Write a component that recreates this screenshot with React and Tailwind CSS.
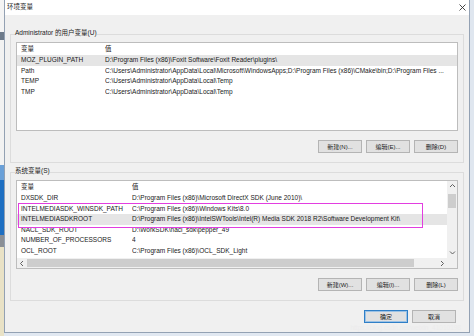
import React from "react";

const F = "font-['Liberation_Sans','Noto_Sans_CJK_SC',sans-serif]";

function Row({ name, value, selected, col }) {
  return (
    <div
      className={`flex h-[10.5px] shrink-0 items-center whitespace-nowrap leading-[10px] ${
        selected ? "bg-[#e5e5e5]" : ""
      }`}
    >
      <div className={`${col} shrink-0 pl-[4px]`}>{name}</div>
      <div className="min-w-0 flex-1 truncate pr-[4px] leading-[10px]">{value}</div>
    </div>
  );
}

function Header({ col }) {
  return (
    <div className="flex h-[12px] shrink-0 items-center leading-none">
      <div className={`${col} shrink-0 pl-[4px]`}>变量</div>
      <div className="flex-1">值</div>
    </div>
  );
}

function Btn({ children, primary }) {
  return (
    <div
      className={`flex h-[13px] w-[44px] items-center justify-center bg-[#e1e1e1] text-[6px] leading-none ${
        primary ? "border border-[#2f7fc7] outline outline-1 -outline-offset-2 outline-[#9cc2e5]" : "border border-[#b4b4b4]"
      }`}
    >
      {children}
    </div>
  );
}

function Chevron({ dir }) {
  const paths = {
    up: "M1 4 L3.5 1.5 L6 4",
    down: "M1 1.5 L3.5 4 L6 1.5",
    left: "M4 1 L1.5 3.5 L4 6",
    right: "M2 1 L4.5 3.5 L2 6",
  };
  return (
    <svg width="7" height="7" viewBox="0 0 7 7">
      <path d={paths[dir]} fill="none" stroke="#606060" strokeWidth="1" />
    </svg>
  );
}

function Legend({ children }) {
  return (
    <div className="absolute left-[4px] top-[-5px] bg-[#f0f0f0] text-[6.5px] leading-none text-[#1a1a1a]">
      {children}
    </div>
  );
}

export default function App() {
  const userCol = "w-[88px]";
  const sysCol = "w-[115px]";
  return (
    <div className={`relative flex h-[336px] w-[474px] overflow-hidden bg-[#e1e8f1] text-[#1a1a1a] ${F}`}>
      {/* desktop strip on the left */}
      <div className="flex h-full w-[4px] shrink-0 flex-col">
        <div className="h-[32px] bg-[#f4f4f4]" />
        <div className="h-[8px] bg-[#6d7a8a]" />
        <div className="h-[125px] bg-[#f2f2f2]" />
        <div className="h-[15px] bg-[#6aa0d8]" />
        <div className="h-[55px] bg-[#1e6fc2]" />
        <div className="h-[12px] bg-[#8a8f96]" />
        <div className="flex-1 bg-[#e9e2c6]" />
      </div>

      {/* window */}
      <div className="relative flex h-[333px] w-[466px] shrink-0 flex-col border border-t-0 border-[#93a1b3]">
        {/* title bar */}
        <div className="flex h-[15px] shrink-0 items-center justify-between bg-white pl-[2px] pr-[3px]">
          <span className="text-[6.5px] leading-none">环境变量</span>
          <svg width="7" height="7" viewBox="0 0 7 7">
            <path d="M0.5 0.5 L6.5 6.5 M6.5 0.5 L0.5 6.5" stroke="#333" strokeWidth="0.9" />
          </svg>
        </div>

        {/* body */}
        <div className="flex flex-1 flex-col bg-[#f0f0f0]">
          {/* user variables group */}
          <div className="relative ml-[5px] mr-[5px] mt-[19px] flex flex-col border border-[#dcdcdc] px-[5px] pb-[9px] pt-[7px]">
            <Legend>Administrator 的用户变量(U)</Legend>
            <div className="flex h-[89px] flex-col overflow-hidden border border-[#bdbdbd] bg-white text-[6.5px]">
              <Header col={userCol} />
              <Row col={userCol} selected name="MOZ_PLUGIN_PATH" value="D:\Program Files (x86)\Foxit Software\Foxit Reader\plugins\" />
              <Row
                col={userCol}
                name="Path"
                value="C:\Users\Administrator\AppData\Local\Microsoft\WindowsApps;D:\Program Files (x86)\CMake\bin;D:\Program Files ..."
              />
              <Row col={userCol} name="TEMP" value="C:\Users\Administrator\AppData\Local\Temp" />
              <Row col={userCol} name="TMP" value="C:\Users\Administrator\AppData\Local\Temp" />
            </div>
            <div className="mt-[9px] flex justify-end gap-[4px]">
              <Btn>新建(N)...</Btn>
              <Btn>编辑(E)...</Btn>
              <Btn>删除(D)</Btn>
            </div>
          </div>

          {/* system variables group */}
          <div className="relative ml-[5px] mr-[5px] mt-[9px] flex flex-col border border-[#dcdcdc] px-[5px] pb-[9px] pt-[7px]">
            <Legend>系统变量(S)</Legend>
            <div className="relative flex h-[89px] flex-col border border-[#bdbdbd] bg-white text-[6.5px]">
              <div className="flex min-h-0 flex-1">
                <div className="flex min-w-0 flex-1 flex-col overflow-hidden">
                  <Header col={sysCol} />
                  <Row col={sysCol} name="DXSDK_DIR" value="D:\Program Files (x86)\Microsoft DirectX SDK (June 2010)\" />
                  <Row col={sysCol} name="INTELMEDIASDK_WINSDK_PATH" value="C:\Program Files (x86)\Windows Kits\8.0" />
                  <Row
                    col={sysCol}
                    selected
                    name="INTELMEDIASDKROOT"
                    value="D:\Program Files (x86)\IntelSWTools\Intel(R) Media SDK 2018 R2\Software Development Kit\"
                  />
                  <Row col={sysCol} name="NACL_SDK_ROOT" value="D:\WorkSDK\nacl_sdk\pepper_49" />
                  <Row col={sysCol} name="NUMBER_OF_PROCESSORS" value="4" />
                  <Row col={sysCol} name="OCL_ROOT" value="C:\Program Files (x86)\OCL_SDK_Light" />
                </div>
                {/* vertical scrollbar */}
                <div className="flex w-[10px] shrink-0 flex-col items-center bg-[#f0f0f0]">
                  <div className="flex h-[10px] items-center justify-center">
                    <Chevron dir="up" />
                  </div>
                  <div className="mt-[3px] h-[14px] w-[8px] bg-[#cdcdcd]" />
                  <div className="flex-1" />
                  <div className="flex h-[10px] items-center justify-center">
                    <Chevron dir="down" />
                  </div>
                </div>
              </div>
              {/* horizontal scrollbar */}
              <div className="flex h-[10px] shrink-0">
                <div className="flex flex-1 items-center bg-[#f0f0f0]">
                  <div className="flex w-[10px] justify-center">
                    <Chevron dir="left" />
                  </div>
                  <div className="h-[8px] w-[387px] bg-[#cdcdcd]" />
                  <div className="flex-1" />
                  <div className="flex w-[10px] justify-center">
                    <Chevron dir="right" />
                  </div>
                </div>
                <div className="w-[10px] bg-[#f0f0f0]" />
              </div>

              {/* highlight annotation */}
              <div className="pointer-events-none absolute left-[1px] top-[22px] h-[25px] w-[405px] border-[1.5px] border-[#e23ee0]" />
            </div>
            <div className="mt-[9px] flex justify-end gap-[4px]">
              <Btn>新建(W)...</Btn>
              <Btn>编辑(I)...</Btn>
              <Btn>删除(L)</Btn>
            </div>
          </div>

          {/* OK / Cancel */}
          <div className="mr-[13px] mt-[9px] flex justify-end gap-[4px]">
            <Btn primary>确定</Btn>
            <Btn>取消</Btn>
          </div>
        </div>

        {/* watermark */}
        <div className="pointer-events-none absolute bottom-[1px] right-[8px] text-[6.5px] leading-none text-[#ececec]">
          https://blog.csdn.net/weixin_41010198
        </div>
      </div>

      <div className="flex-1 bg-[#dfe6ef]" />
    </div>
  );
}
